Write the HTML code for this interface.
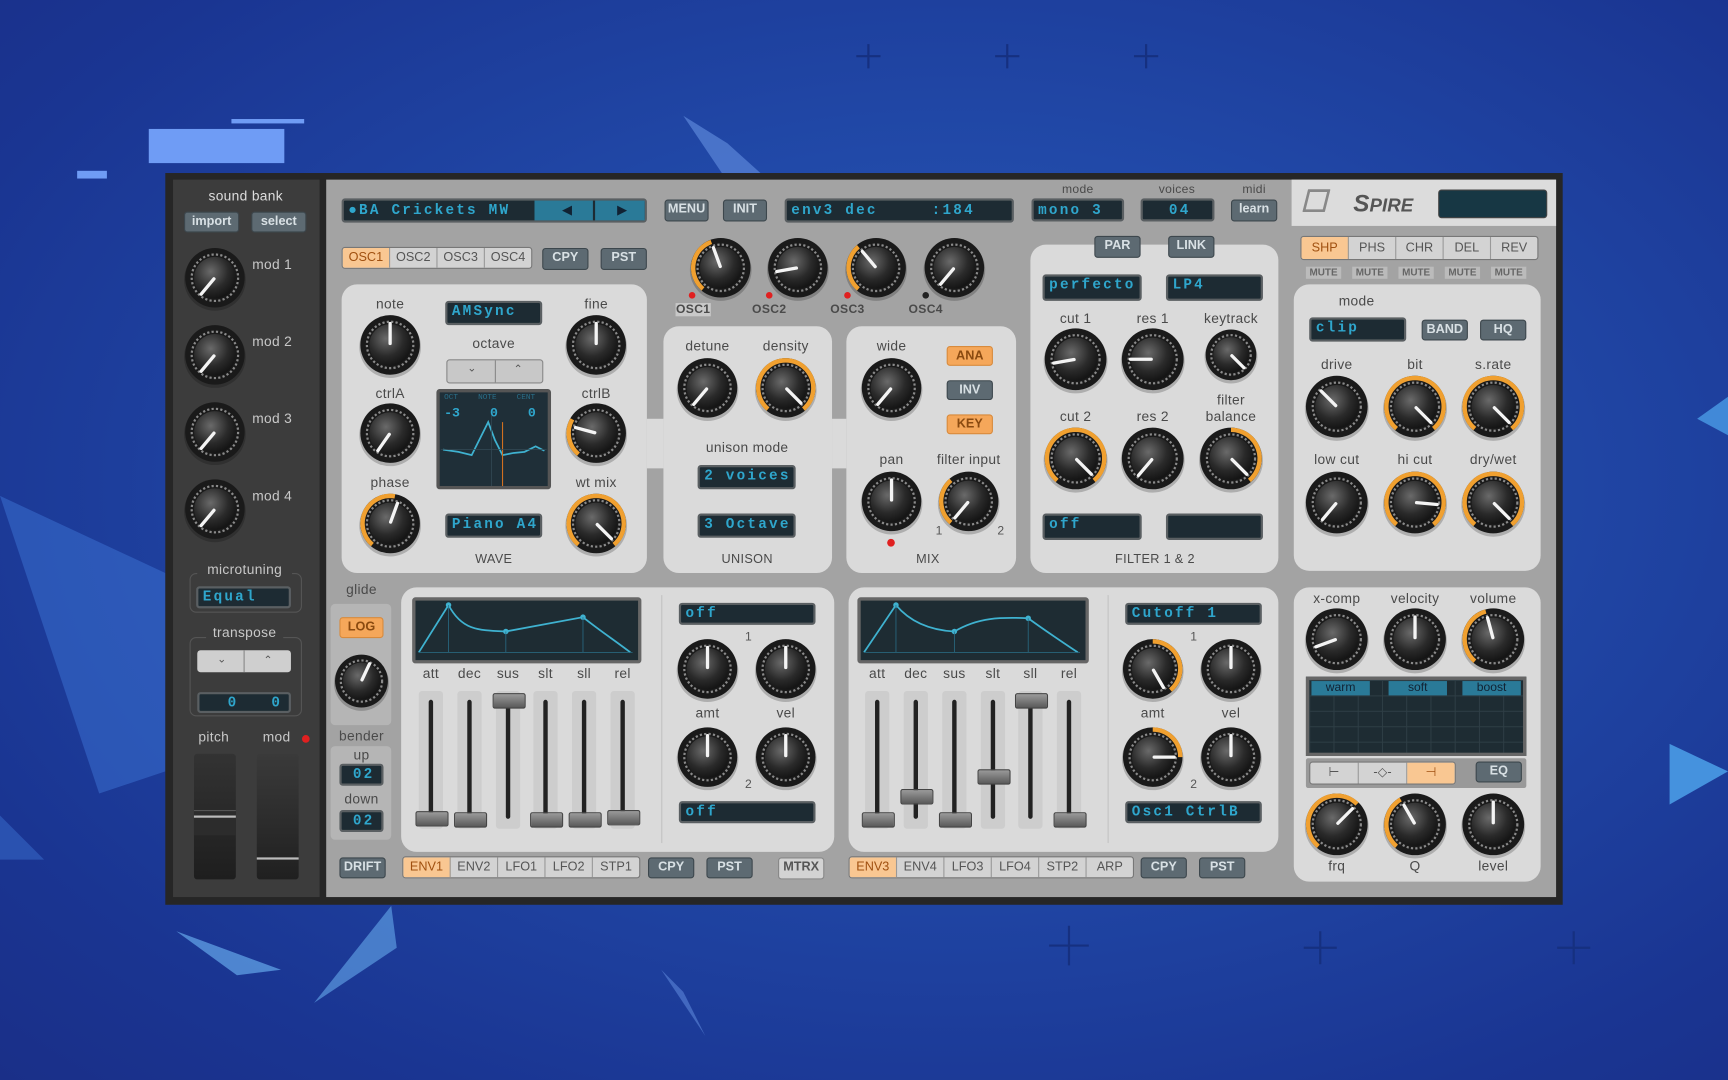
<!DOCTYPE html>
<html><head><meta charset="utf-8"><style>
html,body{margin:0;padding:0;width:1728px;height:1080px;overflow:hidden;background:#1d3c9c}
#w{position:absolute;left:0;top:0;width:1568px;height:980px;transform:scale(1.10204);transform-origin:0 0;
background:radial-gradient(ellipse at 55% 45%,#2a56b8 0%,#2149a8 40%,#1a3592 80%,#1a2f88 100%);font-family:"Liberation Sans",sans-serif;overflow:hidden}
.a{position:absolute}
.frame{left:150px;top:157px;width:1268px;height:664px;background:#262626}
.left{left:157px;top:163px;width:133px;height:651px;background:#3c3c3c}
.main{left:296px;top:163px;width:1116px;height:651px;background:#a3a3a3}
.p{position:absolute;background:#dadada;border-radius:14px}
.l{position:absolute;width:90px;margin-left:-45px;text-align:center;font-size:12.5px;color:#4a4a4a;letter-spacing:.3px}
.lw{color:#c8c8c8}
.d{position:absolute;background:#1d2b33;border:2px solid #5a5f62;border-radius:3px;color:#2fa6cc;font-family:"Liberation Mono",monospace;font-size:13px;letter-spacing:2px;line-height:16px;padding-left:4px;box-sizing:border-box;font-weight:bold}
.b{position:absolute;background:#5d6a72;border:1px solid #3d474d;border-radius:3px;color:#d8e0e4;font-size:11.5px;text-align:center;box-sizing:border-box;line-height:17px;font-weight:bold}
.o{background:#f5a75a;color:#8a4a10;border-color:#d88a3c}
.tabs{position:absolute;display:flex;border:1px solid #777;border-radius:3px;overflow:hidden;background:#d3d3d3}
.tabs span{font-size:11.5px;color:#555;text-align:center;border-right:1px solid #999;line-height:18px}
.tabs span.on{background:#f9c792;color:#a05010}
.trk{position:absolute;width:22px;height:125px;background:#cdcdcd;border-radius:3px}
.trk:before{content:"";position:absolute;left:9px;top:8px;width:4px;height:108px;background:#222;border-radius:2px}
.hd{position:absolute;width:28px;height:12px;margin-left:-3px;background:linear-gradient(#9a9a9a,#5a5a5a);border-radius:2px;border:1px solid #444}
.mute{position:absolute;font-size:9px;color:#666;background:#bbb;width:32px;text-align:center;font-weight:bold;line-height:11px}
</style></head><body><div id="w">
<!-- background decorations -->
<div class="a" style="left:135px;top:117px;width:123px;height:31px;background:#6f9cf5"></div>
<div class="a" style="left:210px;top:108px;width:66px;height:4px;background:#6f9cf5"></div>
<div class="a" style="left:70px;top:155px;width:27px;height:7px;background:#6f9cf5"></div>
<svg class="a" style="left:0;top:0" width="1568" height="980">
<polygon points="620,105 660,130 690,157 655,157" fill="#5b86d8" opacity=".7"/>
<polygon points="0,450 150,520 150,700 90,720" fill="#3a6fd0" opacity=".55"/>
<polygon points="1515,675 1568,700 1515,730" fill="#4a9be6" opacity=".9"/>
<polygon points="1540,380 1568,360 1568,395" fill="#4a9be6" opacity=".8"/>
<polygon points="160,845 255,880 215,885" fill="#5b9ae0" opacity=".8"/>
<polygon points="285,910 355,822 360,860" fill="#5b9ae0" opacity=".7"/>
<polygon points="600,880 640,940 620,900" fill="#5b86d8" opacity=".6"/>
<polygon points="0,740 40,780 0,780" fill="#3a6fd0" opacity=".5"/>
<g stroke="#163080" stroke-width="2"><path d="M788,40v22M777,51h22M914,40v22M903,51h22M1040,40v22M1029,51h22M970,840v36M952,858h36M1198,845v30M1183,860h30M1428,845v30M1413,860h30"/></g>
</svg>
<div class="a frame"></div>
<div class="a left"></div>
<div class="a main"></div>
<div class="a" style="left:1172px;top:163px;width:240px;height:42px;background:#dcdcdc"></div>
<div class="a" style="left:1180px;top:168px;font-size:27px;font-style:italic;font-weight:bold;color:#888;letter-spacing:-2px">&#x2610;</div>
<div class="a" style="left:1228px;top:172px;font-size:22px;font-style:italic;font-weight:bold;color:#555">S<span style="font-size:17px">PIRE</span></div>
<div class="a" style="left:1305px;top:172px;width:97px;height:24px;background:#173744;border-radius:3px;border:1px solid #444"></div>

<!-- left panel -->
<div class="l lw" style="left:223px;top:171px;color:#ddd">sound bank</div>
<div class="b" style="left:167px;top:192px;width:50px;height:19px">import</div>
<div class="b" style="left:228px;top:192px;width:50px;height:19px">select</div>
<div class="l lw" style="left:247px;top:233px">mod 1</div>
<div class="l lw" style="left:247px;top:303px">mod 2</div>
<div class="l lw" style="left:247px;top:373px">mod 3</div>
<div class="l lw" style="left:247px;top:443px">mod 4</div>
<div class="a" style="left:172px;top:520px;width:100px;height:34px;border:1px solid #555;border-radius:6px"></div>
<div class="l lw" style="left:222px;top:510px;background:#3c3c3c;width:86px;margin-left:-43px">microtuning</div>
<div class="d" style="left:178px;top:532px;width:86px;height:20px">Equal</div>
<div class="a" style="left:172px;top:578px;width:100px;height:70px;border:1px solid #555;border-radius:6px"></div>
<div class="l lw" style="left:222px;top:567px;background:#3c3c3c;width:70px;margin-left:-35px">transpose</div>
<div class="a" style="left:179px;top:590px;width:85px;height:20px;background:#cfcfcf;border-radius:3px;font-size:10px;color:#555"><span style="position:absolute;left:18px;top:3px">&#8964;</span><span style="position:absolute;left:60px;top:4px">&#8963;</span><span style="position:absolute;left:42px;top:0;width:1px;height:20px;background:#888"></span></div>
<div class="d" style="left:179px;top:628px;width:85px;height:19px;text-align:right;padding-right:6px;word-spacing:20px">0 0</div>
<div class="l lw" style="left:194px;top:662px">pitch</div>
<div class="l lw" style="left:251px;top:662px">mod</div>
<div class="a" style="left:274px;top:667px;width:7px;height:7px;border-radius:50%;background:#e02020"></div>
<div class="a" style="left:176px;top:684px;width:38px;height:114px;background:linear-gradient(#333,#1e1e1e);border-radius:3px"></div>
<div class="a" style="left:176px;top:735px;width:38px;height:22px;background:#2c2c2c;border-top:1px solid #555"></div>
<div class="a" style="left:176px;top:740px;width:38px;height:2px;background:#bbb"></div>
<div class="a" style="left:233px;top:684px;width:38px;height:114px;background:linear-gradient(#3a3a3a,#202020);border-radius:3px"></div>
<div class="a" style="left:233px;top:778px;width:38px;height:2px;background:#bbb"></div>

<!-- top bar -->
<div class="d" style="left:310px;top:180px;width:277px;height:22px;line-height:18px">&#9679;BA Crickets MW</div>
<div class="a" style="left:485px;top:182px;width:100px;height:18px;background:#2a7a98"></div>
<div class="a" style="left:510px;top:183px;color:#123;font-size:12px">&#9664;</div>
<div class="a" style="left:560px;top:183px;color:#123;font-size:12px">&#9654;</div>
<div class="a" style="left:538px;top:182px;width:2px;height:18px;background:#1d2b33"></div>
<div class="b" style="left:603px;top:181px;width:40px;height:20px">MENU</div>
<div class="b" style="left:656px;top:181px;width:40px;height:20px">INIT</div>
<div class="d" style="left:712px;top:180px;width:208px;height:22px;line-height:18px">env3 dec&nbsp;&nbsp;&nbsp;&nbsp;&nbsp;:184</div>
<div class="l" style="left:978px;top:166px;font-size:11px">mode</div>
<div class="d" style="left:936px;top:180px;width:84px;height:21px;line-height:17px">mono 3</div>
<div class="l" style="left:1068px;top:166px;font-size:11px">voices</div>
<div class="d" style="left:1035px;top:180px;width:67px;height:21px;line-height:17px;text-align:center">04</div>
<div class="l" style="left:1138px;top:166px;font-size:11px">midi</div>
<div class="b" style="left:1117px;top:181px;width:42px;height:20px">learn</div>

<!-- osc tabs -->
<div class="tabs" style="left:310px;top:224px"><span class="on" style="width:42px">OSC1</span><span style="width:42px">OSC2</span><span style="width:42px">OSC3</span><span style="width:42px;border:0">OSC4</span></div>
<div class="b" style="left:492px;top:225px;width:42px;height:20px">CPY</div>
<div class="b" style="left:545px;top:225px;width:42px;height:20px">PST</div>
<div class="l" style="left:629px;top:275px;font-size:11px;font-weight:bold;background:#c8c8c8;width:32px;margin-left:-16px">OSC1</div>
<div class="l" style="left:698px;top:275px;font-size:11px;font-weight:bold">OSC2</div>
<div class="l" style="left:769px;top:275px;font-size:11px;font-weight:bold">OSC3</div>
<div class="l" style="left:840px;top:275px;font-size:11px;font-weight:bold">OSC4</div>
<div class="a" style="left:625px;top:265px;width:6px;height:6px;border-radius:50%;background:#e02020"></div>
<div class="a" style="left:695px;top:265px;width:6px;height:6px;border-radius:50%;background:#e02020"></div>
<div class="a" style="left:766px;top:265px;width:6px;height:6px;border-radius:50%;background:#e02020"></div>
<div class="a" style="left:837px;top:265px;width:6px;height:6px;border-radius:50%;background:#222"></div>

<!-- panels -->
<div class="p" style="left:310px;top:258px;width:277px;height:262px"></div>
<div class="p" style="left:602px;top:296px;width:153px;height:224px"></div>
<div class="p" style="left:768px;top:296px;width:154px;height:224px"></div>
<div class="p" style="left:935px;top:222px;width:225px;height:298px"></div>
<div class="p" style="left:1174px;top:258px;width:224px;height:260px"></div>
<div class="p" style="left:364px;top:533px;width:393px;height:240px"></div>
<div class="p" style="left:770px;top:533px;width:390px;height:240px"></div>
<div class="p" style="left:1174px;top:533px;width:224px;height:267px"></div>
<div class="a" style="left:587px;top:380px;width:15px;height:45px;background:#dadada"></div>
<div class="a" style="left:755px;top:380px;width:13px;height:45px;background:#dadada"></div>
<div class="a" style="left:300px;top:548px;width:55px;height:110px;background:#b5b5b5;border-radius:4px"></div>
<div class="a" style="left:300px;top:677px;width:55px;height:85px;background:#b5b5b5;border-radius:4px"></div>

<!-- osc panel -->
<div class="l" style="left:354px;top:269px">note</div>
<div class="l" style="left:541px;top:269px">fine</div>
<div class="l" style="left:354px;top:350px">ctrlA</div>
<div class="l" style="left:541px;top:350px">ctrlB</div>
<div class="l" style="left:354px;top:431px">phase</div>
<div class="l" style="left:541px;top:431px">wt mix</div>
<div class="d" style="left:404px;top:273px;width:88px;height:22px">AMSync</div>
<div class="l" style="left:448px;top:305px">octave</div>
<div class="a" style="left:405px;top:326px;width:86px;height:20px;background:#c8c8c8;border:1px solid #888;border-radius:3px;font-size:10px;color:#555"><span style="position:absolute;left:18px;top:2px">&#8964;</span><span style="position:absolute;left:60px;top:3px">&#8963;</span><span style="position:absolute;left:43px;top:0;width:1px;height:20px;background:#888"></span></div>
<div class="a" style="left:396px;top:353px;width:104px;height:91px;background:#1f2f38;border:3px solid #555;box-sizing:border-box;border-radius:3px"></div>
<div class="a" style="left:403px;top:357px;font-size:7px;color:#2a6e88;font-family:'Liberation Mono',monospace;word-spacing:14px">OCT NOTE CENT</div>
<div class="a" style="left:403px;top:368px;font-size:12px;color:#2fa6cc;font-family:'Liberation Mono',monospace;font-weight:bold;width:90px;word-spacing:20px">-3 0 0</div>
<svg class="a" style="left:396px;top:353px" width="104" height="91"><path d="M6,55 L20,57 L32,60 L40,44 L47,30 L53,46 L60,60 L70,58 L80,57 L90,52 L98,56" stroke="#3fb2d0" stroke-width="1.6" fill="none"/><path d="M60,30V88" stroke="#d07020" stroke-width="1"/><path d="M50,24V88M4,55H100" stroke="#334a55" stroke-width=".7"/></svg>
<div class="d" style="left:404px;top:466px;width:88px;height:22px">Piano A4</div>
<div class="l" style="left:448px;top:502px;font-size:11.5px">WAVE</div>

<div class="l" style="left:642px;top:307px">detune</div>
<div class="l" style="left:713px;top:307px">density</div>
<div class="l" style="left:678px;top:399px">unison mode</div>
<div class="d" style="left:633px;top:422px;width:89px;height:22px">2 voices</div>
<div class="d" style="left:633px;top:466px;width:89px;height:22px">3 Octave</div>
<div class="l" style="left:678px;top:502px;font-size:11.5px">UNISON</div>

<div class="l" style="left:809px;top:307px">wide</div>
<div class="b o" style="left:859px;top:314px;width:42px;height:18px">ANA</div>
<div class="b" style="left:859px;top:345px;width:42px;height:18px">INV</div>
<div class="b o" style="left:859px;top:376px;width:42px;height:18px">KEY</div>
<div class="l" style="left:809px;top:410px">pan</div>
<div class="l" style="left:879px;top:410px">filter input</div>
<div class="a" style="left:805px;top:489px;width:7px;height:7px;border-radius:50%;background:#e02020"></div>
<div class="a" style="left:849px;top:476px;font-size:11px;color:#555">1</div>
<div class="a" style="left:905px;top:476px;font-size:11px;color:#555">2</div>
<div class="l" style="left:842px;top:502px;font-size:11.5px">MIX</div>

<!-- filter -->
<div class="b" style="left:993px;top:214px;width:42px;height:20px">PAR</div>
<div class="b" style="left:1060px;top:214px;width:42px;height:20px">LINK</div>
<div class="d" style="left:946px;top:249px;width:90px;height:24px">perfecto</div>
<div class="d" style="left:1058px;top:249px;width:88px;height:24px">LP4</div>
<div class="l" style="left:976px;top:282px">cut 1</div>
<div class="l" style="left:1046px;top:282px">res 1</div>
<div class="l" style="left:1117px;top:282px">keytrack</div>
<div class="l" style="left:1117px;top:356px;line-height:15px">filter<br>balance</div>
<div class="l" style="left:976px;top:371px">cut 2</div>
<div class="l" style="left:1046px;top:371px">res 2</div>
<div class="d" style="left:946px;top:466px;width:90px;height:24px">off</div>
<div class="d" style="left:1058px;top:466px;width:88px;height:24px"></div>
<div class="l" style="left:1048px;top:502px;font-size:11.5px;width:120px;margin-left:-60px">FILTER 1 &amp; 2</div>

<!-- fx -->
<div class="tabs" style="left:1180px;top:214px"><span class="on" style="width:42px;line-height:20px">SHP</span><span style="width:42px;line-height:20px">PHS</span><span style="width:42px;line-height:20px">CHR</span><span style="width:42px;line-height:20px">DEL</span><span style="width:42px;line-height:20px;border:0">REV</span></div>
<div class="mute" style="left:1185px;top:242px">MUTE</div><div class="mute" style="left:1227px;top:242px">MUTE</div><div class="mute" style="left:1269px;top:242px">MUTE</div><div class="mute" style="left:1311px;top:242px">MUTE</div><div class="mute" style="left:1353px;top:242px">MUTE</div>
<div class="l" style="left:1231px;top:266px">mode</div>
<div class="d" style="left:1188px;top:288px;width:88px;height:22px">clip</div>
<div class="b" style="left:1290px;top:290px;width:42px;height:19px">BAND</div>
<div class="b" style="left:1343px;top:290px;width:42px;height:19px">HQ</div>
<div class="l" style="left:1213px;top:324px">drive</div>
<div class="l" style="left:1284px;top:324px">bit</div>
<div class="l" style="left:1355px;top:324px">s.rate</div>
<div class="l" style="left:1213px;top:410px">low cut</div>
<div class="l" style="left:1284px;top:410px">hi cut</div>
<div class="l" style="left:1355px;top:410px">dry/wet</div>

<!-- glide -->
<div class="l" style="left:328px;top:528px">glide</div>
<div class="b o" style="left:308px;top:560px;width:40px;height:19px">LOG</div>
<div class="l" style="left:328px;top:661px">bender</div>
<div class="l" style="left:328px;top:678px">up</div>
<div class="d" style="left:308px;top:693px;width:40px;height:20px;text-align:center">02</div>
<div class="l" style="left:328px;top:718px">down</div>
<div class="d" style="left:308px;top:735px;width:40px;height:20px;text-align:center">02</div>

<!-- env 1 -->
<div class="a" style="left:374px;top:542px;width:208px;height:60px;background:#1e2c33;border:3px solid #666;box-sizing:border-box;border-radius:3px"></div>
<svg class="a" style="left:374px;top:542px" width="208" height="60"><path d="M6,50 L33,7 C45,30 60,30 85,31 L155,18 C170,30 185,40 198,50" stroke="#3fb2d0" stroke-width="1.6" fill="none"/><g fill="#3fb2d0"><circle cx="33" cy="7" r="2.5"/><circle cx="85" cy="31" r="2.5"/><circle cx="155" cy="18" r="2.5"/></g><path d="M33,7V50M85,31V50M155,18V50M6,50H200" stroke="#2a6e88" stroke-width=".7"/></svg>
<div class="l" style="left:391px;top:604px">att</div><div class="l" style="left:426px;top:604px">dec</div><div class="l" style="left:461px;top:604px">sus</div><div class="l" style="left:495px;top:604px">slt</div><div class="l" style="left:530px;top:604px">sll</div><div class="l" style="left:565px;top:604px">rel</div>
<div class="d" style="left:616px;top:547px;width:124px;height:20px">off</div>
<div class="d" style="left:616px;top:727px;width:124px;height:20px">off</div>
<div class="a" style="left:676px;top:572px;font-size:11px;color:#555">1</div>
<div class="a" style="left:676px;top:706px;font-size:11px;color:#555">2</div>
<div class="l" style="left:642px;top:640px">amt</div><div class="l" style="left:713px;top:640px">vel</div>
<div class="a" style="left:600px;top:540px;width:1px;height:225px;background:#c2c2c2"></div>
<!-- env 3 -->
<div class="a" style="left:778px;top:542px;width:210px;height:60px;background:#1e2c33;border:3px solid #666;box-sizing:border-box;border-radius:3px"></div>
<svg class="a" style="left:778px;top:542px" width="210" height="60"><path d="M6,50 L35,7 C50,25 70,30 88,31 C110,18 130,18 155,19 C170,30 185,40 200,50" stroke="#3fb2d0" stroke-width="1.6" fill="none"/><g fill="#3fb2d0"><circle cx="35" cy="7" r="2.5"/><circle cx="88" cy="31" r="2.5"/><circle cx="155" cy="19" r="2.5"/></g><path d="M35,7V50M88,31V50M155,19V50M6,50H202" stroke="#2a6e88" stroke-width=".7"/></svg>
<div class="l" style="left:796px;top:604px">att</div><div class="l" style="left:831px;top:604px">dec</div><div class="l" style="left:866px;top:604px">sus</div><div class="l" style="left:901px;top:604px">slt</div><div class="l" style="left:935px;top:604px">sll</div><div class="l" style="left:970px;top:604px">rel</div>
<div class="d" style="left:1021px;top:547px;width:124px;height:20px">Cutoff 1</div>
<div class="d" style="left:1021px;top:727px;width:124px;height:20px">Osc1 CtrlB</div>
<div class="a" style="left:1080px;top:572px;font-size:11px;color:#555">1</div>
<div class="a" style="left:1080px;top:706px;font-size:11px;color:#555">2</div>
<div class="l" style="left:1046px;top:640px">amt</div><div class="l" style="left:1117px;top:640px">vel</div>
<div class="a" style="left:1005px;top:540px;width:1px;height:225px;background:#c2c2c2"></div>

<!-- bottom right -->
<div class="l" style="left:1213px;top:536px">x-comp</div><div class="l" style="left:1284px;top:536px">velocity</div><div class="l" style="left:1355px;top:536px">volume</div>
<div class="a" style="left:1185px;top:614px;width:200px;height:72px;background:#1e2c33;border:3px solid #666;box-sizing:border-box;background-image:linear-gradient(#2e3e45 1px,transparent 1px),linear-gradient(90deg,#2e3e45 1px,transparent 1px);background-size:22px 14px"></div>
<div class="a" style="left:1190px;top:618px;width:53px;height:13px;background:#2a7a98;font-size:11px;text-align:center;color:#123;line-height:13px">warm</div>
<div class="a" style="left:1260px;top:618px;width:53px;height:13px;background:#2a7a98;font-size:11px;text-align:center;color:#123;line-height:13px">soft</div>
<div class="a" style="left:1327px;top:618px;width:53px;height:13px;background:#2a7a98;font-size:11px;text-align:center;color:#123;line-height:13px">boost</div>
<div class="a" style="left:1185px;top:688px;width:200px;height:27px;background:#999;border-radius:2px"></div>
<div class="tabs" style="left:1188px;top:691px"><span style="width:43px;line-height:19px">&#8866;</span><span style="width:43px;line-height:19px">-&#9671;-</span><span class="on" style="width:43px;line-height:19px;border:0">&#8867;</span></div>
<div class="b" style="left:1339px;top:691px;width:42px;height:19px">EQ</div>
<div class="l" style="left:1213px;top:779px">frq</div><div class="l" style="left:1284px;top:779px">Q</div><div class="l" style="left:1355px;top:779px">level</div>

<!-- bottom bars -->
<div class="b" style="left:308px;top:778px;width:42px;height:19px">DRIFT</div>
<div class="tabs" style="left:365px;top:777px"><span class="on" style="width:42px">ENV1</span><span style="width:42px">ENV2</span><span style="width:42px">LFO1</span><span style="width:42px">LFO2</span><span style="width:42px;border:0">STP1</span></div>
<div class="b" style="left:588px;top:778px;width:42px;height:19px">CPY</div>
<div class="b" style="left:641px;top:778px;width:42px;height:19px">PST</div>
<div class="b" style="left:706px;top:778px;width:42px;height:20px;background:#d3d3d3;color:#555;border-color:#888">MTRX</div>
<div class="tabs" style="left:770px;top:777px"><span class="on" style="width:42px">ENV3</span><span style="width:42px">ENV4</span><span style="width:42px">LFO3</span><span style="width:42px">LFO4</span><span style="width:42px">STP2</span><span style="width:42px;border:0">ARP</span></div>
<div class="b" style="left:1035px;top:778px;width:42px;height:19px">CPY</div>
<div class="b" style="left:1088px;top:778px;width:42px;height:19px">PST</div>

<div id="dyn"></div>
</div>
<script>
var dyn=document.getElementById('dyn'),h='';
function K(x,y,r,o,ang,arc){
 var s=r*2+8,c=s/2;
 var rad=function(a){return (a-90)*Math.PI/180};
 var pt=function(a,R){return [c+R*Math.cos(rad(a)),c+R*Math.sin(rad(a))]};
 var g='<svg class="a" style="left:'+(x-c)+'px;top:'+(y-c)+'px" width="'+s+'" height="'+s+'">';
 g+='<defs><radialGradient id="g'+x+'_'+y+'" cx="40%" cy="35%" r="70%"><stop offset="0" stop-color="#6a6a6a"/><stop offset=".6" stop-color="#2a2a2a"/><stop offset="1" stop-color="#111"/></radialGradient></defs>';
 g+='<circle cx="'+c+'" cy="'+(c+2)+'" r="'+(r+1)+'" fill="#00000033"/>';
 g+='<circle cx="'+c+'" cy="'+c+'" r="'+r+'" fill="#1a1a1a"/>';
 if(o){var a0=arc[0],a1=arc[1],p0=pt(a0,r-2),p1=pt(a1,r-2);g+='<path d="M'+p0[0]+','+p0[1]+' A'+(r-2)+','+(r-2)+' 0 '+((a1-a0)>180?1:0)+' 1 '+p1[0]+','+p1[1]+'" stroke="#f0a030" stroke-width="4" fill="none"/>';}
 g+='<circle cx="'+c+'" cy="'+c+'" r="'+(r*0.78)+'" fill="none" stroke="#8a8a8a" stroke-width="2" stroke-dasharray="2 2"/>';
 g+='<circle cx="'+c+'" cy="'+c+'" r="'+(r*0.7)+'" fill="url(#g'+x+'_'+y+')"/>';
 var e=pt(ang,r*0.72),b=pt(ang,r*0.05);
 g+='<line x1="'+b[0]+'" y1="'+b[1]+'" x2="'+e[0]+'" y2="'+e[1]+'" stroke="#f4f4f4" stroke-width="3" stroke-linecap="round"/></svg>';
 h+=g;
}
// left mods
[252,322,392,462].forEach(function(y){K(195,y,27,0,-140)});
K(354,313,27,0,0);K(541,313,27,0,0);K(354,393,27,0,-145);K(541,393,27,1,-75,[-140,-60]);
K(354,475,27,1,20,[-140,10]);K(541,475,27,1,135,[-140,140]);
K(654,243,27,1,-20,[-140,-20]);K(724,243,27,0,-100);K(795,243,27,1,-40,[-140,-40]);K(866,243,27,0,-140);
K(642,352,27,0,-140);K(713,352,27,1,135,[-140,140]);
K(809,352,27,0,-140);K(809,455,27,0,0);K(879,455,27,1,-140,[-140,-40]);
K(976,326,28,0,-100,[-140,-110]);K(1046,326,28,0,-90);K(1117,322,23,0,135);
K(976,416,28,1,135,[-140,140]);K(1046,416,28,0,-140);K(1117,416,28,1,135,[0,140]);
K(1213,369,28,0,-45);K(1284,369,28,1,135,[-140,140]);K(1355,369,28,1,135,[-140,140]);
K(1213,456,28,0,-140);K(1284,456,28,1,95,[-140,140]);K(1355,456,28,1,135,[-140,140]);
K(328,618,24,0,25);
K(642,607,27,0,0);K(713,607,27,0,0);K(642,687,27,0,0);K(713,687,27,0,0);
K(1046,607,27,1,150,[0,140]);K(1117,607,27,0,0);K(1046,687,27,1,90,[0,90]);K(1117,687,27,0,0);
K(1213,580,28,0,-110,[-140,-120]);K(1284,580,28,0,0);K(1355,580,28,1,-15,[-140,-15]);
K(1213,748,28,1,45,[-140,45]);K(1284,748,28,1,-30,[-140,-30]);K(1355,748,28,0,0);
// sliders
function S(x,hy){h+='<div class="trk" style="left:'+(x-11)+'px;top:627px"></div><div class="hd" style="left:'+(x-11)+'px;top:'+hy+'px"></div>';}
[[391,736],[426,737],[461,629],[495,737],[530,737],[565,735]].forEach(function(a){S(a[0],a[1])});
[[796,737],[831,716],[866,737],[901,698],[935,629],[970,737]].forEach(function(a){S(a[0],a[1])});
dyn.innerHTML=h;
</script>
</body></html>
